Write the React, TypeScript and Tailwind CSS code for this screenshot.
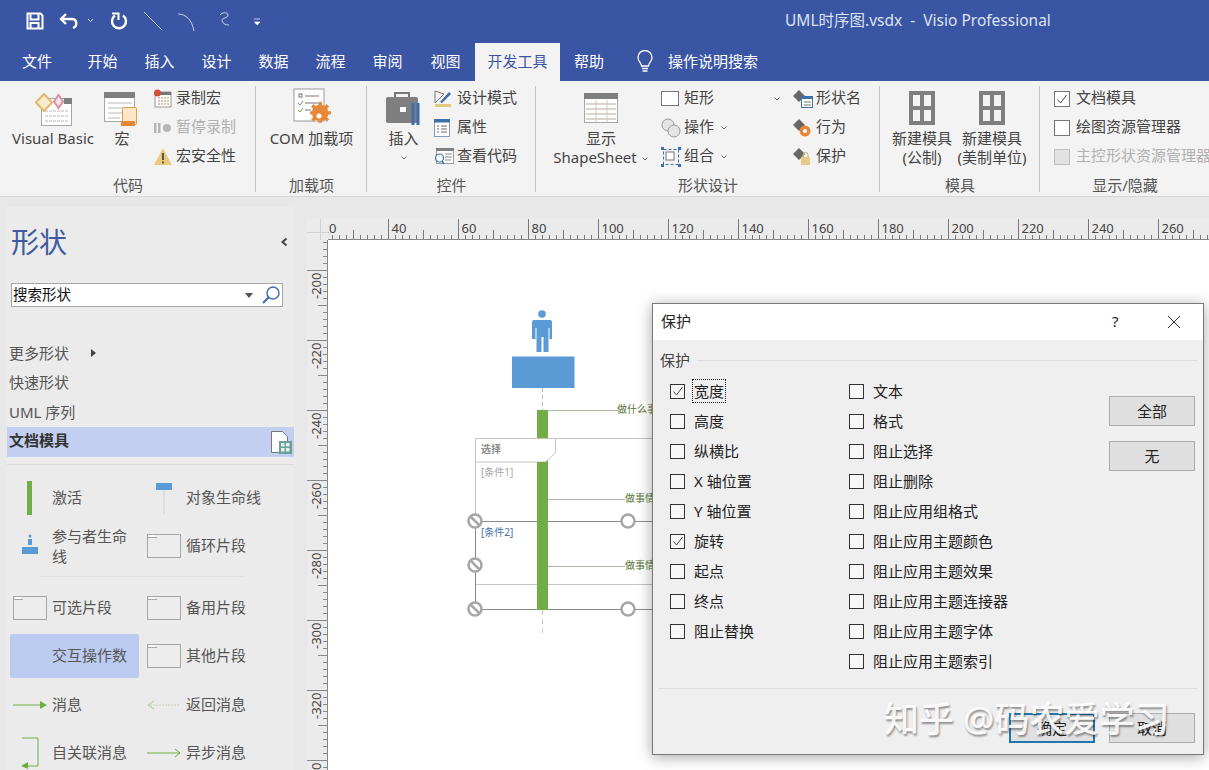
import type { ReactNode } from 'react'

const tabs: [string, string][] = [
  ['文件', 'w-[74px]'], ['开始', 'w-[57px]'], ['插入', 'w-[57px]'], ['设计', 'w-[57px]'], ['数据', 'w-[57px]'],
  ['流程', 'w-[57px]'], ['审阅', 'w-[57px]'], ['视图', 'w-[59px]'],
]

const leftChecks: [string, boolean][] = [
  ['宽度', true], ['高度', false], ['纵横比', false], ['X 轴位置', false], ['Y 轴位置', false],
  ['旋转', true], ['起点', false], ['终点', false], ['阻止替换', false],
]
const rightChecks = [
  '文本', '格式', '阻止选择', '阻止删除', '阻止应用组格式', '阻止应用主题颜色',
  '阻止应用主题效果', '阻止应用主题连接器', '阻止应用主题字体', '阻止应用主题索引',
]

function Chevron({ className = '' }: { className?: string }) {
  return (
    <svg width="8" height="6" viewBox="0 0 8 6" className={className}>
      <path d="M1.5 1.5 4 4l2.5-2.5" fill="none" stroke="#666" strokeWidth="1" />
    </svg>
  )
}

function QuickBar() {
  return (
    <svg width="270" height="26" viewBox="0 0 270 26" className="absolute left-0 top-[7px]">
      <path d="M27.5 6.5h13l2 2v13h-15z M30.5 7v5.5h8V7 M30.5 21v-5h8v5" fill="none" stroke="#fff" strokeWidth="2" />
      <path d="M66 7 61 12l5 5" fill="none" stroke="#fff" strokeWidth="2.4" />
      <path d="M62 12h10c5 0 6 7 1 9" fill="none" stroke="#fff" strokeWidth="2.4" />
      <path d="M88 12l2.5 2.5L93 12" fill="none" stroke="#dfe5f3" strokeWidth="1" />
      <path d="M115 8.5a7 7 0 1 0 8 0" fill="none" stroke="#fff" strokeWidth="2.4" />
      <path d="M112 6.5h6.5V13" fill="none" stroke="#fff" strokeWidth="2" />
      <path d="M144 5l18 18" stroke="#c8d2e8" strokeWidth="1" />
      <path d="M178 7c8 0 14 6 16 17" fill="none" stroke="#c8d2e8" strokeWidth="1" />
      <path d="M220 8c2-3 8-3 8 0 0 3-6 3-6 5 0 3 3 5 7 5" fill="none" stroke="#c8d2e8" strokeWidth="1" />
      <path d="M254 12h6M254.500 15h5.500l-2.700 3z" fill="#fff" stroke="#fff" strokeWidth="0.7" />
    </svg>
  )
}

function Large({ icon, children, className = '' }: { icon: ReactNode; children: ReactNode; className?: string }) {
  return (
    <div className={`flex flex-col items-center shrink-0 ${className}`}>
      <div className="h-[48px] pb-[3px] flex items-end justify-center">{icon}</div>
      <div className="text-center leading-[19px] whitespace-nowrap">{children}</div>
    </div>
  )
}

function Small({ icon, children, muted, chevron, iconBox = 'w-[23px]' }: { icon: ReactNode; children: ReactNode; muted?: boolean; chevron?: boolean; iconBox?: string }) {
  return (
    <div className={`h-[29px] flex items-center whitespace-nowrap ${muted ? 'text-[#b0b0b0]' : ''}`}>
      <div className={`${iconBox} flex items-center shrink-0`}>{icon}</div>
      <span className="pb-[2px]">{children}</span>
      {chevron && <Chevron className="ml-[6px]" />}
    </div>
  )
}

function Group({ label, className, children }: { label: string; className: string; children: ReactNode }) {
  return (
    <div className={`relative shrink-0 h-[116px] ${className}`}>
      <div className="flex h-[98px]">{children}</div>
      <div className="absolute left-0 right-0 top-[94px] text-center text-[15px] leading-[20px] text-[#555]">{label}</div>
      <div className="absolute right-0 top-[5px] h-[106px] w-px bg-[#c6c6c6]" />
    </div>
  )
}

function Sheet() {
  return (
    <svg width="34" height="30" viewBox="0 0 34 30">
      <rect x="0.500" y="0.500" width="33" height="29" fill="#fff" stroke="#a6a6a6" />
      <rect x="0" y="0" width="34" height="6" fill="#7f7f7f" />
      <path d="M2 11h30M2 16h30M2 21h30M2 26h30" stroke="#b8a79c" strokeWidth="1" />
      <path d="M12 7v22M23 7v22" stroke="#d0c8c0" strokeWidth="1" />
    </svg>
  )
}

function Ruler() {
  const ticks = []
  for (let i = 0; i < 130; i++) {
    const x = i * 7 - 10 + 0.5
    const len = i % 10 === 0 ? 21 : i % 5 === 0 ? 10 : 5
    ticks.push(<path key={i} d={`M${x} 21v-${len}`} stroke="#777" strokeWidth="1" />)
    if (i % 10 === 0) {
      ticks.push(
        <text key={`t${i}`} x={x + 3} y="14" fontSize="13" fill="#444">{20 + (i / 10) * 20}</text>,
      )
    }
  }
  return (
    <svg width="881" height="21" className="block bg-[#ebebeb]">
      {ticks}
      <path d="M0 20.500h881" stroke="#888" />
    </svg>
  )
}

function VRuler() {
  const ticks = []
  for (let i = 0; i < 80; i++) {
    const y = 2 + i * 7 + 0.5
    const mod = (i + 6) % 10
    const len = mod === 0 ? 21 : mod === 5 ? 10 : 5
    ticks.push(<path key={i} d={`M21 ${y}h-${len}`} stroke="#888" strokeWidth="1" />)
    if (mod === 0) {
      const label = -(200 + ((i - 4) / 10) * 20)
      ticks.push(
        <text key={`t${i}`} x="14" y={y + 2} fontSize="13" fill="#444" textAnchor="end" transform={`rotate(-90 14 ${y + 2})`}>{label}</text>,
      )
    }
  }
  return (
    <svg width="21" height="530" className="block bg-[#ebebeb] shrink-0">
      {ticks}
      <path d="M20.500 0v530" stroke="#888" />
    </svg>
  )
}

function Handle({ x, y, slash }: { x: number; y: number; slash?: boolean }) {
  return (
    <g>
      <circle cx={x} cy={y} r="6.500" fill="#fff" stroke="#a6a6a6" strokeWidth="2.500" />
      {slash && <path d={`M${x - 5} ${y - 5}l10 10`} stroke="#a6a6a6" strokeWidth="2.500" />}
    </g>
  )
}

function Diagram() {
  return (
    <svg width="881" height="530" viewBox="328 240 881 530" className="absolute left-0 top-0">
      <circle cx="542" cy="314" r="3.800" fill="#5b9bd5" />
      <path d="M534 320h16a2 2 0 0 1 2 2v17h-2.500v-11h-1v24h-5v-15h-2v15h-5v-24h-1v11H532v-17a2 2 0 0 1 2-2z" fill="#5b9bd5" />
      <rect x="512" y="356.500" width="62.500" height="31.500" fill="#5b9bd5" />
      <path d="M542.500 388v22" stroke="#a9bcd6" strokeDasharray="4 3" />
      <rect x="537" y="410" width="11" height="200" fill="#70ad47" />
      <path d="M542.500 610v26" stroke="#c8c8c8" strokeDasharray="5 4" />
      <path d="M548 410.500h70M548 499.500h77M548 566.500h77" stroke="#a8b89c" />
      <g fontSize="10" fill="#557535">
        <text x="617" y="413">做什么事</text>
        <text x="625" y="502">做事情</text>
        <text x="625" y="569">做事情</text>
      </g>
      <path d="M475.500 438.500H660M475.500 438.500V521M475.500 584.500H660" stroke="#c4c4c4" fill="none" />
      <path d="M475.500 521.500H660M475.500 521.500V609.500M475.500 609.500H660" stroke="#8a8a8a" fill="none" />
      <path d="M475.500 438.500h80v14l-10 9.500h-70z" fill="#fff" stroke="#c4c4c4" />
      <text x="481" y="453" fontSize="10" fill="#8c8c8c" fontWeight="700">选择</text>
      <text x="481" y="476" fontSize="10" fill="#a6a6a6">[条件1]</text>
      <text x="481" y="536" fontSize="10" fill="#4a72a8">[条件2]</text>
      <rect x="537" y="462" width="11" height="148" fill="#70ad47" />
      <Handle x={475} y={521} slash />
      <Handle x={475} y={565} slash />
      <Handle x={475} y={609} slash />
      <Handle x={628} y={521} />
      <Handle x={628} y={609} />
    </svg>
  )
}

function Frame() {
  return (
    <svg width="34" height="24" viewBox="0 0 34 24">
      <rect x="0.500" y="0.500" width="33" height="23" fill="#ececec" stroke="#a6a6a6" />
      <path d="M1 3.500h9" stroke="#a6a6a6" />
      <rect x="2" y="1" width="6" height="2" fill="#fff" />
    </svg>
  )
}

function Stencil({ icon, label, active, tall }: { icon?: ReactNode; label: string; active?: boolean; tall?: boolean }) {
  return (
    <div className={`flex items-center ${tall ? 'h-[52px]' : 'h-[44px]'} ${active ? 'bg-[#bccbf0] rounded-[2px]' : ''}`}>
      <div className="w-[39px] mr-[3px] shrink-0 flex justify-center">{icon}</div>
      <div className="leading-[20px] pb-[1px]">{label}</div>
    </div>
  )
}

function Check({ label, checked, focus }: { label: string; checked?: boolean; focus?: boolean }) {
  return (
    <div className="h-[30px] flex items-center">
      <div className="w-[15px] h-[15px] border border-[#333] bg-[#f7f7f7] shrink-0 flex items-center justify-center">
        {checked && (
          <svg width="12" height="12" viewBox="0 0 12 12">
            <path d="M1.500 6.500 4.500 10l6-8" fill="none" stroke="#444" strokeWidth="1" />
          </svg>
        )}
      </div>
      <span className={`ml-[7px] leading-[22px] px-[1px] border whitespace-nowrap ${focus ? 'border-dotted border-[#222]' : 'border-transparent'}`}>{label}</span>
    </div>
  )
}

function Dialog() {
  return (
    <div className="absolute left-[652px] top-[303px] w-[552px] h-[452px] border border-[#777] bg-[#efefef] shadow-[0_2px_14px_rgba(0,0,0,0.35)] text-[15px] text-[#222] flex flex-col">
      <div className="h-[36px] bg-white flex items-center pl-[8px] shrink-0 relative">
        <span className="pb-[2px]">保护</span>
        <span className="absolute left-[459px] top-[6px] text-[15px]">?</span>
        <svg width="14" height="14" viewBox="0 0 14 14" className="absolute left-[514px] top-[11px]">
          <path d="M1 1l12 12M13 1 1 13" stroke="#333" strokeWidth="1" />
        </svg>
      </div>
      <div className="flex items-center pl-[7px] pr-[6px] mt-[10px] h-[20px]">
        <span className="text-[#444]">保护</span>
        <div className="flex-1 h-px bg-[#dcdcdc] ml-[7px] mt-[1px]" />
      </div>
      <div className="flex pl-[17px] mt-[6px] h-[300px]">
        <div className="w-[179px]">
          {leftChecks.map(([label, checked], i) => (
            <Check key={label} label={label} checked={checked} focus={i === 0} />
          ))}
        </div>
        <div className="w-[260px]">
          {rightChecks.map((label) => (
            <Check key={label} label={label} />
          ))}
        </div>
        <div className="flex flex-col gap-[15px] mt-[20px]">
          <div className="w-[86px] h-[30px] bg-[#dfdfdf] border border-[#adadad] flex items-center justify-center">全部</div>
          <div className="w-[86px] h-[30px] bg-[#dfdfdf] border border-[#adadad] flex items-center justify-center">无</div>
        </div>
      </div>
      <div className="h-px bg-[#dcdcdc] mx-[6px] mt-[12px]" />
      <div className="flex justify-end gap-[14px] pr-[8px] mt-[24px]">
        <div className="w-[86px] h-[30px] bg-[#e1e1e1] border-2 border-[#2176ae] flex items-center justify-center">确定</div>
        <div className="w-[86px] h-[30px] bg-[#dfdfdf] border border-[#adadad] flex items-center justify-center">取消</div>
      </div>
    </div>
  )
}

export default function App() {
  return (
    <div className="relative w-[1209px] h-[770px] overflow-hidden bg-[#e8e8e8] font-['Noto_Sans','Noto_Sans_CJK_SC',sans-serif] text-[15px] text-[#444]">
      {/* title bar */}
      <div className="relative h-[43px] bg-[#3955a3]">
        <QuickBar />
        <div className="absolute left-[785px] top-[9px] text-[15.500px] leading-[22px] text-[#dce3f2] whitespace-pre">UML时序图.vsdx  -  Visio Professional</div>
      </div>

      {/* tabs */}
      <div className="h-[38px] bg-[#3955a3] flex text-white">
        {tabs.map(([t, w]) => (
          <div key={t} className={`${w} pb-[2px] flex items-center justify-center`}>{t}</div>
        ))}
        <div className="w-[85px] pb-[2px] bg-[#f3f3f3] text-[#3955a3] flex items-center justify-center">开发工具</div>
        <div className="w-[58px] pb-[2px] flex items-center justify-center">帮助</div>
        <svg width="18" height="24" viewBox="0 0 18 24" className="ml-[18px] self-center">
          <path d="M5.500 16c0-3-3.500-4.500-3.500-8.500a7 7 0 0 1 14 0c0 4-3.500 5.500-3.500 8.500z" fill="none" stroke="#fff" strokeWidth="1.300" />
          <path d="M6 18.500h6M6.500 21h5" stroke="#fff" strokeWidth="1.500" />
        </svg>
        <div className="ml-[14px] pb-[2px] flex items-center">操作说明搜索</div>
      </div>

      {/* ribbon */}
      <div className="h-[116px] bg-[#f3f3f3] border-b border-[#d6d6d6] flex overflow-hidden">
        <Group label="代码" className="w-[256px]">
          <Large className="w-[106px]" icon={
            <svg width="37" height="33" viewBox="0 0 37 33">
              <rect x="6.500" y="5.500" width="30" height="27" fill="#fff" stroke="#a6a6a6" />
              <rect x="29" y="5" width="8" height="6" fill="#7f7f7f" />
              <path d="M10 18h23M10 23h23M10 28h23" stroke="#b8b8b8" strokeDasharray="3 1" />
              <path d="M9 1 17 9.500 9 18 1 9.500z" fill="#f7ecd0" stroke="#e0b96a" strokeWidth="2" />
              <path d="M23.500 2 28 8.500 23.500 15 19 8.500z" fill="#f8e3e8" stroke="#d98ea5" strokeWidth="2" />
            </svg>
          }>Visual Basic</Large>
          <Large className="w-[32px]" icon={
            <svg width="36" height="34" viewBox="0 0 36 34">
              <rect x="0.500" y="0.500" width="30" height="29" fill="#fff" stroke="#a6a6a6" />
              <rect x="0" y="0" width="31" height="6" fill="#7f7f7f" />
              <path d="M4 11h24M4 16h24M4 21h14M4 26h12" stroke="#b8b8b8" />
              <rect x="18.500" y="15.500" width="14" height="17" rx="1" fill="#fbe6c8" stroke="#e29a4b" />
              <rect x="17" y="29" width="14" height="5" fill="#e8873a" />
            </svg>
          }>宏</Large>
          <div className="ml-[15px] pt-[3px]">
            <Small icon={
              <svg width="20" height="20" viewBox="0 0 20 20">
                <rect x="2" y="3" width="16" height="15" fill="#fff" stroke="#999" />
                <rect x="2" y="3" width="16" height="3" fill="#777" />
                <path d="M5 9h11M5 12h11M5 15h11" stroke="#b08a6a" strokeDasharray="2 1" />
                <circle cx="4.500" cy="4" r="3.500" fill="#d0503c" />
              </svg>
            }>录制宏</Small>
            <Small muted icon={
              <svg width="20" height="12" viewBox="0 0 20 12">
                <path d="M1 1h2.500v10H1zM5 1h2.500v10H5z" fill="#b5b5b5" />
                <circle cx="14" cy="6" r="4" fill="#b5b5b5" />
              </svg>
            }>暂停录制</Small>
            <Small icon={
              <svg width="20" height="19" viewBox="0 0 20 19">
                <path d="M10 1 19 18H1z" fill="#edc97e" />
                <path d="M10 6v7M10 14.500v2" stroke="#555" strokeWidth="2" />
              </svg>
            }>宏安全性</Small>
          </div>
        </Group>
        <Group label="加载项" className="w-[111px]">
          <Large className="w-full" icon={
            <svg width="38" height="38" viewBox="0 0 38 38">
              <rect x="1" y="1" width="30" height="32" fill="#fff" stroke="#999" />
              <rect x="6" y="6" width="3" height="3" fill="none" stroke="#777" />
              <path d="M12 8h14M12 15h14M12 22h6" stroke="#777" />
              <path d="M5 15l2 2 3-4M5 22l2 2 3-4" stroke="#6a9a50" fill="none" />
              <path d="M27 15l2.500 1v3l3 1 2-2 2.500 2.500-2 2 1 3h3v3.500h-3l-1 3 2 2-2.500 2.500-2-2-3 1v2h-4v-2l-3-1-2 2-2.500-2.500 2-2-1-3h-2v-3.500h2l1-3-2-2 2.500-2.500 2 2 3-1z" transform="translate(1 -1) scale(0.95)" fill="#e8873a" />
              <circle cx="26" cy="28" r="2.500" fill="#fff" />
            </svg>
          }>COM 加载项</Large>
        </Group>
        <Group label="控件" className="w-[169px]">
          <div className="w-[67px] pl-[6px] flex flex-col items-center shrink-0">
            <div className="h-[48px] pb-[2px] flex items-end justify-center">
              <svg width="38" height="36" viewBox="0 0 38 36">
                <path d="M10 6V2h14v4" fill="none" stroke="#777" strokeWidth="2" />
                <rect x="1" y="6" width="32" height="26" rx="2" fill="#7f7f7f" />
                <rect x="15" y="16" width="6" height="5" fill="#fff" />
                <path d="M28 12v22M33 12v22" stroke="#3e6fa8" strokeWidth="3" />
              </svg>
            </div>
            <div className="leading-[19px]">插入</div>
            <Chevron className="mt-[7px]" />
          </div>
          <div className="pt-[3px]">
            <Small icon={
              <svg width="18" height="18" viewBox="0 0 18 18">
                <path d="M1 1v12l9-9z" fill="none" stroke="#777" />
                <path d="M6 12l9-10 2 2-9 9z" fill="#3e6fa8" />
                <rect x="1" y="14" width="16" height="3" fill="#e5c77a" />
              </svg>
            }>设计模式</Small>
            <Small icon={
              <svg width="16" height="18" viewBox="0 0 16 18">
                <rect x="0.500" y="0.500" width="15" height="17" fill="#fff" stroke="#7f9cc0" />
                <rect x="0" y="0" width="16" height="3.500" fill="#3e6fa8" />
                <path d="M3 7h2M7 7h6M3 10h2M7 10h6M3 13h2M7 13h6" stroke="#666" />
              </svg>
            }>属性</Small>
            <Small icon={
              <svg width="20" height="18" viewBox="0 0 20 18">
                <rect x="2.500" y="0.500" width="17" height="15" fill="#fff" stroke="#999" />
                <rect x="2" y="0" width="18" height="3" fill="#7f7f7f" />
                <path d="M11 6h7M11 9h7M11 12h6" stroke="#888" />
                <circle cx="5.500" cy="10" r="4" fill="#fff" stroke="#3e6fa8" strokeWidth="1.200" />
                <path d="M8 13l2 3" stroke="#3e6fa8" strokeWidth="1.500" />
              </svg>
            }>查看代码</Small>
          </div>
        </Group>
        <Group label="形状设计" className="w-[344px]">
          <div className="w-[125px] shrink-0 flex flex-col items-center pl-[5px]">
            <div className="h-[48px] pb-[6px] flex items-end"><Sheet /></div>
            <div className="leading-[19px]">显示</div>
            <div className="leading-[19px] whitespace-nowrap">ShapeSheet<Chevron className="inline ml-[4px]" /></div>
          </div>
          <div className="w-[132px] shrink-0 pt-[3px]">
            <div className="h-[29px] flex items-center">
              <div className="w-[23px]"><div className="w-[18px] h-[15px] border border-[#777] bg-white" /></div>
              <span className="pb-[2px]">矩形</span>
              <Chevron className="ml-[59px]" />
            </div>
            <Small chevron icon={
              <svg width="20" height="20" viewBox="0 0 20 20">
                <circle cx="7" cy="7" r="6" fill="#e4e4e4" stroke="#999" />
                <circle cx="13" cy="13" r="6" fill="#e4e4e4" stroke="#999" />
              </svg>
            }>操作</Small>
            <Small chevron icon={
              <svg width="20" height="20" viewBox="0 0 20 20">
                <rect x="2.500" y="2.500" width="15" height="15" fill="none" stroke="#3e6fa8" strokeDasharray="3 2" />
                <rect x="5" y="5" width="8" height="8" fill="#fff" stroke="#777" />
                <path d="M0 0h3v3H0zM17 0h3v3h-3zM0 17h3v3H0zM17 17h3v3h-3z" fill="#3e6fa8" />
              </svg>
            }>组合</Small>
          </div>
          <div className="pt-[3px]">
            <Small icon={
              <svg width="20" height="18" viewBox="0 0 20 18">
                <path d="M6 0 12 6 6 12 0 6z" fill="#666" />
                <rect x="8.500" y="6.500" width="11" height="11" fill="#fff" stroke="#3e6fa8" />
                <rect x="8" y="6" width="12" height="3" fill="#3e6fa8" />
                <path d="M11 12h7M11 15h7" stroke="#777" />
              </svg>
            }>形状名</Small>
            <Small icon={
              <svg width="20" height="18" viewBox="0 0 20 18">
                <path d="M6 0 12 6 6 12 0 6z" fill="#666" />
                <circle cx="12" cy="12" r="5.500" fill="#e8873a" />
                <circle cx="12" cy="12" r="2" fill="#fff" />
              </svg>
            }>行为</Small>
            <Small icon={
              <svg width="20" height="18" viewBox="0 0 20 18">
                <path d="M6 0 12 6 6 12 0 6z" fill="#666" />
                <path d="M10 9V7a2.500 2.500 0 0 1 5 0v2" fill="none" stroke="#c9a86a" />
                <rect x="8" y="9" width="9" height="8" fill="#e8c98c" />
              </svg>
            }>保护</Small>
          </div>
        </Group>
        <Group label="模具" className="w-[160px]">
          <div className="flex pl-[10px] gap-[6px]">
            {['(公制)', '(美制单位)'].map((unit) => (
              <div key={unit} className="w-[64px] flex flex-col items-center shrink-0">
                <div className="h-[48px] pb-[4px] flex items-end">
                  <svg width="26" height="34" viewBox="0 0 26 34">
                    <rect width="26" height="34" fill="#7f7f7f" />
                    <path d="M4 4h7v11H4zM15 4h7v11h-7zM4 19h7v11H4zM15 19h7v11h-7z" fill="#f3f3f3" />
                  </svg>
                </div>
                <div className="leading-[19px] whitespace-nowrap">新建模具</div>
                <div className="leading-[19px] whitespace-nowrap">{unit}</div>
              </div>
            ))}
          </div>
        </Group>
        <Group label="显示/隐藏" className="w-[170px]">
          <div className="pl-[14px] pt-[3px]">
            <Small iconBox="w-[22px]" icon={
              <div className="w-[16px] h-[16px] border border-[#777] bg-white flex items-center justify-center">
                <svg width="12" height="12" viewBox="0 0 12 12">
                  <path d="M1.500 6.500 4.500 10l6-8" fill="none" stroke="#444" strokeWidth="1" />
                </svg>
              </div>
            }>文档模具</Small>
            <Small iconBox="w-[22px]" icon={<div className="w-[16px] h-[16px] border border-[#777] bg-white" />}>绘图资源管理器</Small>
            <Small muted iconBox="w-[22px]" icon={<div className="w-[16px] h-[16px] border border-[#c0c0c0] bg-[#e2e2e2]" />}>主控形状资源管理器</Small>
          </div>
        </Group>
      </div>

      {/* body */}
      <div className="flex h-[573px]">
        <aside className="w-[288px] ml-[7px] mt-[10px] shrink-0 bg-[#ebebeb] text-[#555] overflow-hidden">
          <div className="flex items-center justify-between h-[46px] mt-[12px] pl-[4px] pr-[7px]">
            <span className="text-[28px] leading-[40px] text-[#3f5aa0]">形状</span>
            <svg width="8" height="10" viewBox="0 0 8 10">
              <path d="M6.500 1.500 2.500 5l4 3.500" fill="none" stroke="#444" strokeWidth="2" />
            </svg>
          </div>
          <div className="mx-[4px] mt-[18px] w-[272px] h-[24px] bg-white border border-[#a6a6a6] flex items-center px-[1px] text-[14.500px] text-[#111]">
            <span className="flex-1 pb-[3px] leading-[20px]">搜索形状</span>
            <svg width="8" height="5" viewBox="0 0 8 5" className="mr-[8px]"><path d="M0 0h8L4 5z" fill="#555" /></svg>
            <svg width="20" height="20" viewBox="0 0 20 20">
              <circle cx="12" cy="8" r="6" fill="none" stroke="#3f6fb0" strokeWidth="1.500" />
              <path d="M8 12l-6 6" stroke="#3f6fb0" strokeWidth="2.200" />
            </svg>
          </div>
          <div className="mt-[31px]">
            <div className="h-[29.500px] flex items-center pl-[2px]">
              <span>更多形状</span>
              <svg width="5" height="8" viewBox="0 0 5 8" className="ml-[22px]"><path d="M0 0l5 4-5 4z" fill="#444" /></svg>
            </div>
            <div className="h-[29.500px] flex items-center pl-[2px]">快速形状</div>
            <div className="h-[29.500px] flex items-center pl-[2px]">UML 序列</div>
            <div className="h-[30px] w-[287px] flex items-center justify-between pl-[2px] pr-[2px] bg-[#c2cff0] text-[#333]">
              <span className="font-bold pb-[2px]">文档模具</span>
              <svg width="22" height="24" viewBox="0 0 22 24">
                <path d="M1.500 1.500h11l5 5v16h-16z" fill="#fff" stroke="#777" />
                <rect x="9" y="11" width="13" height="13" fill="#6aa09a" />
                <path d="M11 13h3.500v3.500H11zM16 13h3.500v3.500H16zM11 18h3.500v3.500H11zM16 18h3.500v3.500H16z" fill="#e8f0ee" />
              </svg>
            </div>
          </div>
          <div className="h-px w-[287px] bg-[#dcdcdc] mt-[7px]" />
          <div className="grid grid-cols-[129px_140px] gap-x-[5px] ml-[3px] mt-[11px]">
            <Stencil label="激活" icon={<div className="w-[5px] h-[34px] bg-[#70ad47]" />} />
            <Stencil label="对象生命线" icon={
              <svg width="18" height="34" viewBox="0 0 18 34">
                <rect x="1" y="2" width="16" height="7" fill="#5b9bd5" />
                <path d="M9 9v24" stroke="#d0d0d0" />
              </svg>
            } />
            <div className="h-[52px] flex items-center">
              <div className="w-[39px] mr-[3px] shrink-0 flex justify-center">
                <svg width="18" height="24" viewBox="0 0 18 24">
                  <circle cx="9" cy="2" r="1.500" fill="#5b9bd5" />
                  <path d="M7 5h4v6H7z" fill="#5b9bd5" />
                  <rect x="1" y="13" width="16" height="7" fill="#5b9bd5" />
                </svg>
              </div>
              <div className="leading-[20px] w-[80px]">参与者生命线</div>
            </div>
            <Stencil tall label="循环片段" icon={<Frame />} />
            <div className="col-span-2 h-[4px]" />
            <div className="col-span-2 h-px w-[205px] bg-[#e0e0e0] ml-[30px]" />
            <div className="col-span-2 h-[9px]" />
            <Stencil label="可选片段" icon={<Frame />} />
            <Stencil label="备用片段" icon={<Frame />} />
            <div className="col-span-2 h-[4px]" />
            <Stencil active label="交互操作数" />
            <Stencil label="其他片段" icon={<Frame />} />
            <div className="col-span-2 h-[5px]" />
            <Stencil label="消息" icon={
              <svg width="34" height="8" viewBox="0 0 34 8">
                <path d="M0 4h28" stroke="#70ad47" />
                <path d="M27 0l7 4-7 4z" fill="#70ad47" />
              </svg>
            } />
            <Stencil label="返回消息" icon={
              <svg width="34" height="10" viewBox="0 0 34 10">
                <path d="M7 1 1 5l6 4" fill="none" stroke="#a5c98c" />
                <path d="M3 5h30" stroke="#c8cfc0" strokeDasharray="2 1" />
              </svg>
            } />
            <div className="col-span-2 h-[4px]" />
            <Stencil label="自关联消息" icon={
              <svg width="18" height="32" viewBox="0 0 18 32">
                <path d="M1 1h16v28H6" fill="none" stroke="#70ad47" />
                <path d="M7 25l-7 4 7 3z" fill="#70ad47" />
              </svg>
            } />
            <Stencil label="异步消息" icon={
              <svg width="34" height="10" viewBox="0 0 34 10">
                <path d="M0 5h33M28 1l5 4-5 4" fill="none" stroke="#70ad47" />
              </svg>
            } />
          </div>
        </aside>
        <div className="flex-1 min-w-0 ml-[12px] pt-[22px]">
          <div className="flex h-[21px]">
            <svg width="21" height="21" className="block shrink-0 bg-[#ebebeb]">
              <path d="M0 13.500h21M13.500 0v21" stroke="#d0d0d0" />
            </svg>
            <Ruler />
          </div>
          <div className="flex">
            <VRuler />
            <div className="relative w-[881px] h-[530px] bg-white overflow-hidden">
              <Diagram />
            </div>
          </div>
        </div>
      </div>

      <Dialog />

      {/* watermark */}
      <div className="absolute left-[884px] top-[697px] text-[35px] leading-[44px] font-medium text-white/90 [text-shadow:1px_2px_2px_rgba(0,0,0,0.4)] whitespace-pre">知乎 @码农爱学习</div>
    </div>
  )
}
